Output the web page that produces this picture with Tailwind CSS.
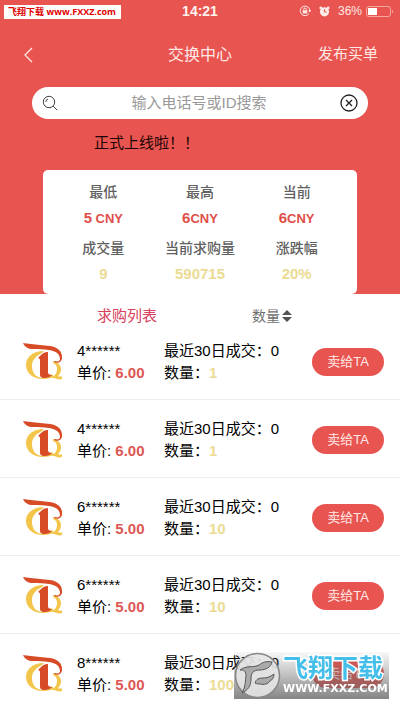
<!DOCTYPE html>
<html lang="zh-CN">
<head>
    <meta charset="UTF-8">
    <meta name="viewport" content="width=device-width, initial-scale=1.0">
    <title>交换中心</title>
    <script src="https://cdn.jsdelivr.net/npm/@tailwindcss/browser@4"></script>
    <style>
        body {
            font-family: "Liberation Sans", "Noto Sans CJK SC", sans-serif;
        }
    </style>
</head>
<body class="bg-white text-black overflow-x-hidden">
    <!-- logo shared by every row -->
    <svg class="hidden">
        <symbol id="logo" viewBox="0 0 40 40">
            <path d="M21 9C10 9 3 15 3 23c0 8 7 14 17 14 5 0 8-2 11-1 3 1 5 2 8 1v-3c-1 1-3 1-4 0 2-2 3-4 3-7 0-4-3-7-8-8v2c3 1 4 3 4 6s-1 5-3 7l-3-2-1 2c-2 1-4 2-7 2-7 0-11-5-11-12 0-6 4-10 10-13z" fill="#f3c64b"/>
            <path d="M0 1c2 4 5 6 10 6 6 0 10 0 16 1 7 1 11 4 11 9 0 2-2 3-5 2l-1 1c4 2 7 0 8-3 1-7-4-12-12-13C20 3 14 3 8 2 5 2 2 1 0 1z" fill="#d84b27"/>
            <path d="M17 14c2-2 4-4 8-4v20c0 2 1 3 4 3-2 2-4 3-7 3-4 0-5-1-5-4V18c0-1-1-2-2-2z" fill="#d84b27"/>
        </symbol>
    </svg>

    <header class="bg-[#e85450] text-[#ffe9e6]">
        <div class="relative flex h-[22px] items-center justify-end pr-[6px]">
            <div class="absolute left-1 top-[5px] h-[14px] w-[117px] overflow-hidden whitespace-nowrap bg-white pl-1 text-[9px] font-bold leading-[14px] text-[#e00000]">飞翔下载 <span class="font-['Open_Sans']">www.FXXZ.com</span></div>
            <span class="absolute left-1/2 -translate-x-1/2 text-sm font-bold leading-[22px] text-[#fff2ef]">14:21</span>
            <div class="flex items-center">
                <svg class="mr-2 size-3" viewBox="0 0 12 12" fill="none" stroke="currentColor">
                    <path d="M10 8.5A4.8 4.8 0 1 1 10.8 6"/>
                    <path d="M9.2 5.2h3L10.8 7.4z" fill="currentColor" stroke="none"/>
                    <path d="M4.7 5.4V4.3a1.3 1.3 0 0 1 2.6 0v1.1"/>
                    <path d="M3.7 5.2h4.6v3.3H3.7z" fill="currentColor" stroke="none"/>
                </svg>
                <svg class="mr-2 size-[11px]" viewBox="0 0 11 11" fill="currentColor">
                    <circle cx="5.5" cy="5.8" r="4.6"/>
                    <circle cx="1.8" cy="1.9" r="1.4"/>
                    <circle cx="9.2" cy="1.9" r="1.4"/>
                    <path d="M5.5 3.2v2.8H7.5" fill="none" stroke="#e85450"/>
                </svg>
                <span class="mr-1 text-xs">36%</span>
                <svg class="h-[11px] w-7" viewBox="0 0 28 11">
                    <rect x=".5" y=".5" width="24" height="10" rx="2.5" fill="none" stroke="#f5a8a2"/>
                    <rect x="2" y="2" width="9" height="7" fill="#fff"/>
                    <path d="M26 4c1.5.5 1.5 2.5 0 3z" fill="#f5a8a2"/>
                </svg>
            </div>
        </div>

        <nav class="grid h-[65px] grid-cols-3 items-center px-[22px]">
            <button type="button" aria-label="返回" class="justify-self-start">
                <svg class="h-4 w-3" viewBox="0 0 12 16" fill="none" stroke="currentColor" stroke-width="1.3"><path d="M10 1L3 8l7 7"/></svg>
            </button>
            <h1 class="justify-self-center text-base">交换中心</h1>
            <a href="#" class="justify-self-end text-[15px]">发布买单</a>
        </nav>

        <form class="mx-8 flex h-8 items-center rounded-full bg-white px-[10px]">
            <svg class="size-4 shrink-0" viewBox="0 0 16 16" fill="none" stroke="#444">
                <circle cx="7" cy="7" r="5.7"/>
                <path d="M11.2 11.2l4 4M3.8 7A3.2 3.2 0 0 1 6 4"/>
            </svg>
            <input type="text" aria-label="搜索" placeholder="输入电话号或ID搜索" class="min-w-0 flex-1 bg-transparent text-center text-[15px] text-black outline-none placeholder:text-[#999]">
            <button type="reset" aria-label="清除">
                <svg class="size-[18px]" viewBox="0 0 18 18" fill="none" stroke="#222" stroke-width="1.3">
                    <circle cx="9" cy="9" r="8"/>
                    <path d="M6 6l6 6M12 6l-6 6"/>
                </svg>
            </button>
        </form>

        <p class="px-[94px] pb-4 pt-[13px] text-[15px] leading-[22px] text-[#1c0505]">正式上线啦！！</p>

        <dl class="mx-[43px] grid grid-cols-3 rounded-[5px] bg-white px-3 pb-[7px] pt-[9px] text-center text-[#606060]">
            <div>
                <dt class="text-sm font-medium leading-[26px]">最低</dt>
                <dd class="text-[13px] font-bold leading-[26px] text-[#e04e4a]"><span class="text-[15px]">5</span> CNY</dd>
            </div>
            <div>
                <dt class="text-sm font-medium leading-[26px]">最高</dt>
                <dd class="text-[13px] font-bold leading-[26px] text-[#e04e4a]"><span class="text-[15px]">6</span>CNY</dd>
            </div>
            <div>
                <dt class="text-sm font-medium leading-[26px]">当前</dt>
                <dd class="text-[13px] font-bold leading-[26px] text-[#e04e4a]"><span class="text-[15px]">6</span>CNY</dd>
            </div>
            <div class="pt-[3px]">
                <dt class="text-sm font-medium leading-[26px]">成交量</dt>
                <dd class="text-[15px] font-bold leading-[26px] text-[#ecdb93]">9</dd>
            </div>
            <div class="pt-[3px]">
                <dt class="text-sm font-medium leading-[26px]">当前求购量</dt>
                <dd class="text-[15px] font-bold leading-[26px] text-[#ecdb93]">590715</dd>
            </div>
            <div class="pt-[3px]">
                <dt class="text-sm font-medium leading-[26px]">涨跌幅</dt>
                <dd class="text-[15px] font-bold leading-[26px] text-[#ecdb93]">20%</dd>
            </div>
        </dl>
    </header>

    <main>
        <div class="flex h-7 justify-between pl-[97px] pr-[108px] pt-[11px]">
            <h2 class="text-[15px] leading-[22px] text-[#d8405c]">求购列表</h2>
            <button type="button" class="flex h-[22px] items-center gap-[2px] text-sm text-[#6f6f6f]">
                数量
                <svg class="h-3 w-[10px]" viewBox="0 0 10 12" fill="#555"><path d="M5 0l5 5H0zM0 7h10l-5 5z"/></svg>
            </button>
        </div>
        <ul id="orders"></ul>
    </main>

    <!-- site stamp over the last row -->
    <div class="fixed bottom-3 right-[11px] flex h-[47px] w-[155px] items-center gap-[2px] bg-linear-to-b from-[#777]/5 to-[#666]/80">
        <svg class="size-[47px] shrink-0" viewBox="0 0 47 47">
            <circle cx="23.5" cy="23.5" r="22" fill="#e6e6e6" fill-opacity=".9" stroke="#858585" stroke-width="1.5"/>
            <path d="M6 18c6-5 14-2 19-5 4-3 7-4 13-3-1 5-6 8-12 8-7 0-9 3-9 9 0 7-3 11-9 14 4-7 3-12 4-17 0-5-2-6-6-6z" fill="#aaa" stroke="#555"/>
            <path d="M21 31c1-4 4-5 8-5s7-1 11-4c0 4-2 6-4 7-2 3-6 4-10 3-2 0-3 0-5-1z" fill="#aaa" stroke="#555"/>
        </svg>
        <div class="whitespace-nowrap font-bold">
            <div class="text-[25px] leading-[27px] text-[#45bfea] [-webkit-text-stroke:3px_white] [paint-order:stroke_fill]">飞翔下载</div>
            <div class="font-['DejaVu_Sans'] text-[11px] leading-[14px] text-white">WWW.FXXZ.COM</div>
        </div>
    </div>

    <script>
        const orders = [
            { name: "4******", price: "6.00", deals: 0, amount: 1 },
            { name: "4******", price: "6.00", deals: 0, amount: 1 },
            { name: "6******", price: "5.00", deals: 0, amount: 10 },
            { name: "6******", price: "5.00", deals: 0, amount: 10 },
            { name: "8******", price: "5.00", deals: 0, amount: 100 }
        ];

        const list = document.getElementById('orders');
        orders.forEach(order => {
            const li = document.createElement('li');
            li.className = 'flex h-[78px] items-center border-b border-[#eee] pl-[23px] pr-4 pt-[3px] text-[15px] leading-[22px]';
            li.innerHTML = `
                <svg class="mr-[14px] size-10 shrink-0"><use href="#logo"/></svg>
                <div class="w-[87px] shrink-0 whitespace-nowrap">
                    <div>${order.name}</div>
                    <div>单价: <b class="text-[#de5754]">${order.price}</b></div>
                </div>
                <div class="flex-1 whitespace-nowrap">
                    <div>最近30日成交：${order.deals}</div>
                    <div>数量：<b class="text-[#ecdb93]">${order.amount}</b></div>
                </div>
                <button type="button" class="h-7 w-[72px] shrink-0 rounded-full bg-[#e85450] text-[13px] text-[#ffe9e6]">卖给TA</button>
            `;
            list.appendChild(li);
        });
    </script>
</body>
</html>
